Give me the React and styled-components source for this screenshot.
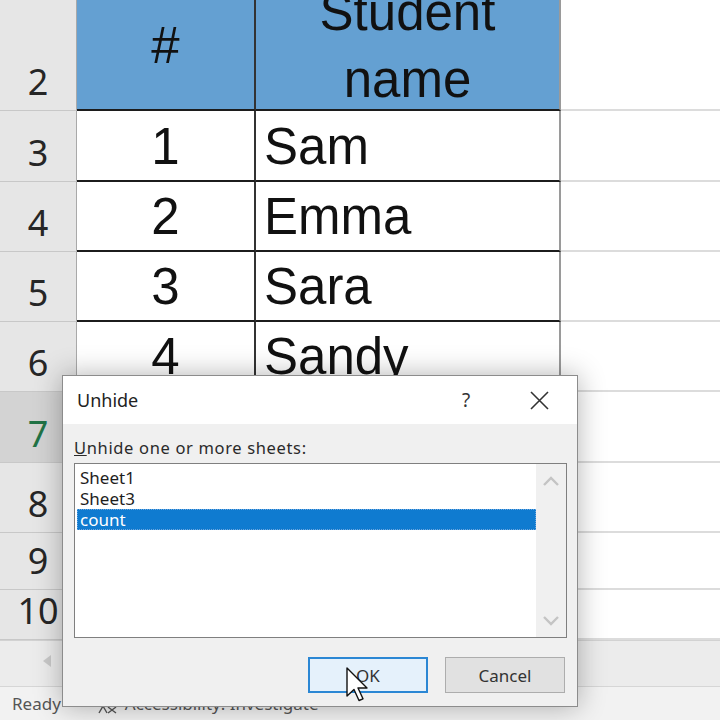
import React from "react";
import styled, { createGlobalStyle } from "styled-components";

const GlobalStyle = createGlobalStyle`
  html, body {
    margin: 0;
    padding: 0;
  }
  body {
    width: 720px;
    height: 720px;
    overflow: hidden;
    background: #fff;
    font-family: "Noto Sans", "Open Sans", sans-serif;
  }
  * {
    box-sizing: border-box;
  }
`;

const Page = styled.div`
  position: relative;
  width: 720px;
  height: 720px;
  display: flex;
  flex-direction: column;
  overflow: hidden;
`;

const Sheet = styled.div`
  display: grid;
  grid-template-columns: 77px 179px 305px 1fr;
  grid-template-rows: ${({ $rows }) => $rows.map((h) => `${h}px`).join(" ")};
  height: 640px;
  flex-shrink: 0;
`;

const RowHead = styled.div`
  display: flex;
  align-items: flex-end;
  justify-content: center;
  padding-bottom: 10px;
  background: ${({ $active }) => ($active ? "#d3d3d3" : "#e6e6e6")};
  color: ${({ $active }) => ($active ? "#217346" : "#262626")};
  border-bottom: 1px solid #c8c8c8;
  border-right: 1px solid #a9a9a9;
  font: 36px/1 "Noto Sans", "Open Sans", sans-serif;
`;

const Cell = styled.div`
  display: flex;
  align-items: flex-end;
  justify-content: ${({ $center }) => ($center ? "center" : "flex-start")};
  text-align: ${({ $center }) => ($center ? "center" : "left")};
  padding: 0 0 ${({ $pb }) => $pb ?? 3}px ${({ $center }) => ($center ? 0 : 8)}px;
  font: 51px/1.15 "Liberation Sans", Arial, sans-serif;
  color: #111;
  background: ${({ $head }) => ($head ? "#64a0d2" : "#fff")};
  border-bottom: ${({ $table }) => ($table ? "2px solid #1c1c1c" : "2px solid #dcdcdc")};
  border-right: ${({ $edge }) =>
    $edge === "inner"
      ? "2px solid #333"
      : $edge === "outer"
      ? "2px solid #9a9a9a"
      : "none"};
  white-space: nowrap;
`;

const HeadText = styled.span`
  display: block;
  line-height: 67px;
  margin-bottom: -4px;
`;

const ScrollStrip = styled.div`
  height: 47px;
  flex-shrink: 0;
  background: #ececec;
  border-top: 1px solid #d2d2d2;
  border-bottom: 1px solid #d6d6d6;
  display: flex;
  align-items: center;
  padding: 0 0 6px 42px;
`;

const StatusBar = styled.div`
  height: 33px;
  flex-shrink: 0;
  background: #f2f2f2;
  display: flex;
  align-items: center;
  gap: 34px;
  padding-left: 12px;
  font: 17px/1 "Noto Sans", "Open Sans", sans-serif;
  color: #555;
`;

const Access = styled.span`
  display: flex;
  align-items: center;
  gap: 8px;
`;

const Dialog = styled.div`
  position: absolute;
  left: 62px;
  top: 375px;
  width: 516px;
  height: 332px;
  border: 1px solid #8c8c8c;
  background: #f0f0f0;
  box-shadow: 0 0 26px rgba(0, 0, 0, 0.3);
  display: flex;
  flex-direction: column;
  font-family: "Noto Sans", "Open Sans", sans-serif;
  color: #222;
`;

const TitleBar = styled.div`
  height: 48px;
  background: #fff;
  display: flex;
  align-items: center;
  padding: 0 18px 0 14px;
  font-size: 18px;
`;

const Title = styled.span`
  flex: 1;
`;

const TitleButton = styled.span`
  width: 40px;
  display: flex;
  justify-content: center;
  align-items: center;
  color: #333;
  font-size: 19px;
  margin-left: ${({ $gap }) => $gap || 0}px;
`;

const Body = styled.div`
  flex: 1;
  display: flex;
  flex-direction: column;
  padding: 13px 11px 0 11px;
`;

const Label = styled.div`
  font-size: 16.5px;
  line-height: 22px;
  letter-spacing: 0.65px;
  color: #2a2a2a;
`;

const ListBox = styled.div`
  margin-top: 4px;
  height: 175px;
  width: 493px;
  border: 1px solid #7f7f7f;
  background: #fff;
  display: flex;
`;

const Items = styled.div`
  flex: 1;
  padding: 3px 0 0 2px;
`;

const Item = styled.div`
  height: 21px;
  line-height: 21px;
  font-size: 17px;
  padding-left: 3px;
  color: ${({ $selected }) => ($selected ? "#fff" : "#1e1e1e")};
  background: ${({ $selected }) => ($selected ? "#0f7bd0" : "transparent")};
  outline: ${({ $selected }) => ($selected ? "1px dotted #6da6de" : "none")};
  outline-offset: -1px;
`;

const ScrollBar = styled.div`
  width: 30px;
  background: #f0f0f0;
  display: flex;
  flex-direction: column;
  justify-content: space-between;
  align-items: center;
  padding: 11px 0 10px;
`;

const Buttons = styled.div`
  margin-top: 19px;
  display: flex;
  justify-content: flex-end;
  gap: 17px;
  padding-right: 1px;
`;

const Button = styled.div`
  width: 120px;
  height: 36px;
  display: flex;
  align-items: center;
  justify-content: center;
  font-size: 17px;
  color: #333;
  background: ${({ $primary }) => ($primary ? "#e5f1fb" : "#e1e1e1")};
  border: ${({ $primary }) => ($primary ? "2px solid #2b87d4" : "1px solid #adadad")};
`;

const Cursor = styled.svg`
  position: absolute;
  left: 345px;
  top: 666px;
`;

const Chevron = ({ up }) => (
  <svg width="18" height="12" viewBox="0 0 18 12">
    <path
      d={up ? "M2 10 L9 3 L16 10" : "M2 2 L9 9 L16 2"}
      fill="none"
      stroke="#c4c4c4"
      strokeWidth="2.4"
    />
  </svg>
);

const rows = [
  { n: 2, h: 111, head: true },
  { n: 3, h: 71, num: "1", name: "Sam" },
  { n: 4, h: 70, num: "2", name: "Emma" },
  { n: 5, h: 70, num: "3", name: "Sara" },
  { n: 6, h: 70, num: "4", name: "Sandy" },
  { n: 7, h: 71, active: true },
  { n: 8, h: 70 },
  { n: 9, h: 57 },
  { n: 10, h: 50 },
];

const sheets = ["Sheet1", "Sheet3", "count"];

export default function App() {
  return (
    <Page>
      <GlobalStyle />
      <Sheet $rows={rows.map((r) => r.h)}>
        {rows.map((r) => {
          const inTable = r.head || r.num;
          return (
            <React.Fragment key={r.n}>
              <RowHead $active={r.active}>{r.n}</RowHead>
              {r.head ? (
                <>
                  <Cell $head $table $center $edge="inner" $pb={33}>#</Cell>
                  <Cell $head $table $center $edge="outer" $pb={0}>
                    <HeadText>
                      Student
                      <br />
                      name
                    </HeadText>
                  </Cell>
                </>
              ) : (
                <>
                  <Cell $table={inTable} $center $edge={inTable ? "inner" : null}>
                    {r.num}
                  </Cell>
                  <Cell $table={inTable} $edge={inTable ? "outer" : null}>
                    {r.name}
                  </Cell>
                </>
              )}
              <Cell />
            </React.Fragment>
          );
        })}
      </Sheet>

      <ScrollStrip>
        <svg width="10" height="12" viewBox="0 0 10 12">
          <path d="M9 0 L9 12 L1 6 Z" fill="#c9c9c9" />
        </svg>
      </ScrollStrip>

      <StatusBar>
        <span>Ready</span>
        <Access>
          <svg width="22" height="20" viewBox="0 0 22 20">
            <circle cx="8" cy="3" r="2" fill="none" stroke="#555" strokeWidth="1.4" />
            <path d="M1 7 L15 7 M8 7 L8 12 L4 19 M8 12 L12 19" fill="none" stroke="#555" strokeWidth="1.4" />
            <path d="M13 13 L21 19 M21 13 L13 19" fill="none" stroke="#555" strokeWidth="1.4" />
          </svg>
          <span>Accessibility: Investigate</span>
        </Access>
      </StatusBar>

      <Dialog>
        <TitleBar>
          <Title>Unhide</Title>
          <TitleButton>?</TitleButton>
          <TitleButton $gap={33}>
            <svg width="19" height="19" viewBox="0 0 19 19">
              <path d="M1 1 L18 18 M18 1 L1 18" stroke="#333" strokeWidth="1.6" />
            </svg>
          </TitleButton>
        </TitleBar>
        <Body>
          <Label>
            <u>U</u>nhide one or more sheets:
          </Label>
          <ListBox>
            <Items>
              {sheets.map((s) => (
                <Item key={s} $selected={s === "count"}>
                  {s}
                </Item>
              ))}
            </Items>
            <ScrollBar>
              <Chevron up />
              <Chevron />
            </ScrollBar>
          </ListBox>
          <Buttons>
            <Button $primary>OK</Button>
            <Button>Cancel</Button>
          </Buttons>
        </Body>
      </Dialog>

      <Cursor width="24" height="38" viewBox="0 0 24 38">
        <path
          d="M2 2 L2 30 L9 23.5 L14 34.5 L18 32.8 L13 22 L22 22 Z"
          fill="#fff"
          stroke="#111"
          strokeWidth="1.4"
          strokeLinejoin="round"
        />
      </Cursor>
    </Page>
  );
}
